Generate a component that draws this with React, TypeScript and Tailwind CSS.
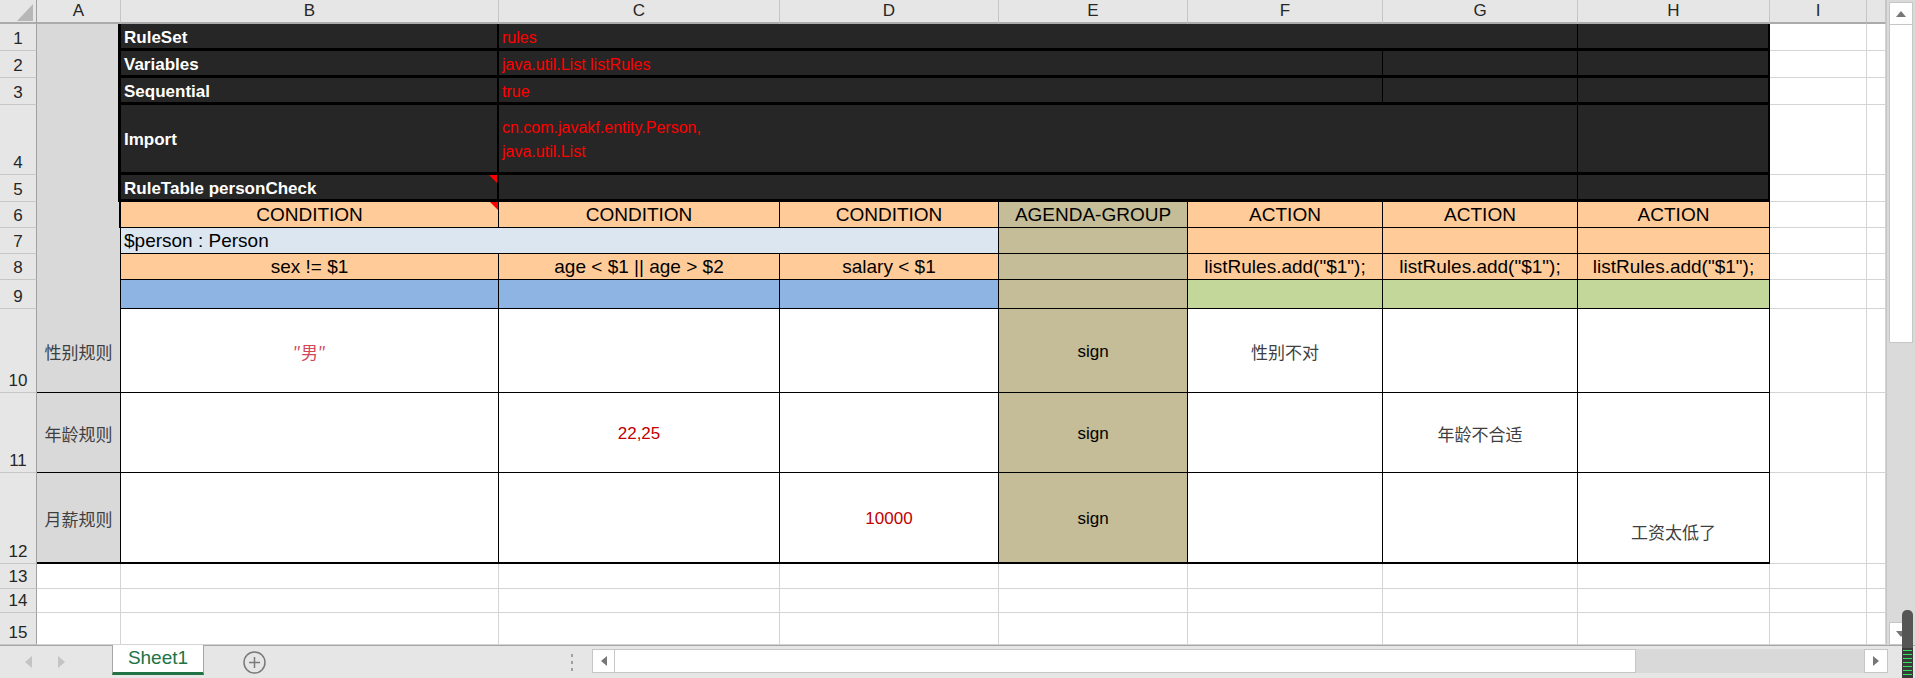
import React from 'react';

type Kids = { children?: React.ReactNode; className?: string };

// column header letters, last one is the clipped J column
const LETTERS = ['A', 'B', 'C', 'D', 'E', 'F', 'G', 'H', 'I', ''];

function Corner() {
  return (
    <div className="relative bg-[#e6e6e6] border-r border-r-[#a0a0a0] border-b-2 border-b-[#ababab]">
      <svg className="absolute left-0 top-0" width="37" height="24" viewBox="0 0 37 24">
        <polygon points="17,21 33,21 33,4" fill="#b7b7b7" />
      </svg>
    </div>
  );
}

function RowNum({ n }: { n: number }) {
  return (
    <div className="flex items-end justify-center bg-[#e6e6e6] border-r border-r-[#a0a0a0] border-b border-b-[#c6c6c6] pb-px text-[17px] leading-[20px] text-[#262626]">
      {n}
    </div>
  );
}

function Blank() {
  return <div className="bg-white border-r border-b border-[#d4d4d4]" />;
}

function Dark({ children, className = '' }: Kids) {
  return (
    <div className={`relative flex items-center px-[3px] pt-[3px] bg-[#262626] border-r border-b-[3px] border-black overflow-hidden whitespace-nowrap ${className}`}>
      {children}
    </div>
  );
}

function Label({ children }: Kids) {
  return <span className="text-[17px] font-bold text-white">{children}</span>;
}

function Red({ children }: Kids) {
  return <span className="text-[16px] text-[#ff0000]">{children}</span>;
}

function Cell({ children, className = '' }: Kids) {
  return (
    <div className={`relative flex items-center justify-center pt-[2px] border-r border-b border-black overflow-hidden whitespace-nowrap ${className}`}>
      {children}
    </div>
  );
}

function Flag() {
  return (
    <svg className="absolute right-0 top-0" width="8" height="8" viewBox="0 0 8 8">
      <polygon points="0,0 8,0 8,8" fill="#ff0000" />
    </svg>
  );
}

function Cjk({ children, className = '' }: Kids) {
  return (
    <span className={`font-['Noto_Sans_CJK_SC',sans-serif] text-[17px] ${className}`}>{children}</span>
  );
}

function VScroll() {
  return (
    <div className="w-[29px] h-[645px] flex flex-col items-center border-l border-[#c6c6c6] bg-[#dadada]">
      <div className="mt-[2px] w-[24px] h-[23px] bg-white border border-[#c6c6c6] flex items-center justify-center">
        <svg width="10" height="6" viewBox="0 0 10 6">
          <polygon points="0,6 10,6 5,0" fill="#777" />
        </svg>
      </div>
      <div className="w-[24px] h-[318px] bg-white border border-[#c6c6c6] border-t-0" />
      <div className="flex-1" />
      <div className="w-[24px] h-[23px] bg-white border border-[#c6c6c6] flex items-center justify-center">
        <svg width="10" height="6" viewBox="0 0 10 6">
          <polygon points="0,0 10,0 5,6" fill="#777" />
        </svg>
      </div>
    </div>
  );
}

function BottomBar() {
  return (
    <div className="flex h-[33px] bg-[#e6e6e6] border-t border-[#a6a6a6]">
      <div className="w-[112px] flex items-center">
        <svg className="ml-[25px]" width="7" height="12" viewBox="0 0 7 12">
          <polygon points="7,0 7,12 0,6" fill="#c4c4c4" />
        </svg>
        <svg className="ml-[26px]" width="7" height="12" viewBox="0 0 7 12">
          <polygon points="0,0 0,12 7,6" fill="#c4c4c4" />
        </svg>
      </div>
      <div className="w-[92px] h-[30px] -mt-px bg-white border-x border-[#a6a6a6] border-b-[3px] border-b-[#217346] flex items-center justify-center text-[19px] text-[#217346]">
        Sheet1
      </div>
      <div className="ml-[39px] flex items-center">
        <svg width="23" height="23" viewBox="0 0 23 23">
          <circle cx="11.5" cy="11.5" r="10.5" fill="none" stroke="#7a7a7a" strokeWidth="1.5" />
          <path d="M11.5 6v11M6 11.5h11" stroke="#7a7a7a" strokeWidth="1.5" />
        </svg>
      </div>
      <div className="w-[303px]" />
      <div className="w-[6px] flex flex-col items-center justify-center gap-[4px]">
        <div className="w-[2px] h-[3px] bg-[#a0a0a0]" />
        <div className="w-[2px] h-[3px] bg-[#a0a0a0]" />
        <div className="w-[2px] h-[3px] bg-[#a0a0a0]" />
      </div>
      <div className="w-[17px]" />
      <div className="w-[1296px] h-[24px] mt-[3px] flex">
        <div className="w-[23px] h-full bg-white border border-[#c6c6c6] flex items-center justify-center">
          <svg width="6" height="10" viewBox="0 0 6 10">
            <polygon points="6,0 6,10 0,5" fill="#777" />
          </svg>
        </div>
        <div className="w-[1021px] h-full bg-white border border-l-0 border-[#c6c6c6]" />
        <div className="flex-1 h-full bg-[#d9d9d9]" />
        <div className="w-[24px] h-full bg-white border border-[#c6c6c6] flex items-center justify-center">
          <svg width="6" height="10" viewBox="0 0 6 10">
            <polygon points="0,0 0,10 6,5" fill="#777" />
          </svg>
        </div>
      </div>
      <div className="flex-1" />
    </div>
  );
}

export default function App() {
  return (
    <div className="relative w-[1915px] h-[678px] overflow-hidden bg-white font-['Liberation_Sans',Arial,sans-serif] text-black">
      <div className="flex h-[645px]">
        <div className="grid w-[1886px] h-[645px] grid-cols-[37px_84px_378px_281px_219px_189px_195px_195px_192px_97px_19px] grid-rows-[24px_27px_27px_27px_70px_27px_26px_26px_26px_29px_84px_80px_91px_25px_24px_32px]">
          {/* column headers */}
          <Corner />
          {LETTERS.map((l, i) => (
            <div
              key={i}
              className="flex items-center justify-center bg-[#e6e6e6] border-r border-r-[#c6c6c6] border-b-2 border-b-[#ababab] text-[17px] text-[#262626]"
            >
              {l}
            </div>
          ))}

          {/* 1 */}
          <RowNum n={1} />
          <div className="bg-[#d9d9d9] border-r-[3px] border-black" />
          <Dark className="border-r-2"><Label>RuleSet</Label></Dark>
          <Dark className="col-span-5"><Red>rules</Red></Dark>
          <Dark className="border-r-2" />
          <Blank />
          <Blank />

          {/* 2 */}
          <RowNum n={2} />
          <div className="bg-[#d9d9d9] border-r-[3px] border-black" />
          <Dark className="border-r-2"><Label>Variables</Label></Dark>
          <Dark className="col-span-4"><Red>java.util.List listRules</Red></Dark>
          <Dark />
          <Dark className="border-r-2" />
          <Blank />
          <Blank />

          {/* 3 */}
          <RowNum n={3} />
          <div className="bg-[#d9d9d9] border-r-[3px] border-black" />
          <Dark className="border-r-2"><Label>Sequential</Label></Dark>
          <Dark className="col-span-4"><Red>true</Red></Dark>
          <Dark />
          <Dark className="border-r-2" />
          <Blank />
          <Blank />

          {/* 4 */}
          <RowNum n={4} />
          <div className="bg-[#d9d9d9] border-r-[3px] border-black" />
          <Dark className="border-r-2"><Label>Import</Label></Dark>
          <Dark className="col-span-5">
            <div className="flex flex-col leading-[24px]">
              <Red>cn.com.javakf.entity.Person,</Red>
              <Red>java.util.List</Red>
            </div>
          </Dark>
          <Dark className="border-r-2" />
          <Blank />
          <Blank />

          {/* 5 */}
          <RowNum n={5} />
          <div className="bg-[#d9d9d9] border-r-[3px] border-black" />
          <Dark className="border-r-2"><Label>RuleTable personCheck</Label><Flag /></Dark>
          <Dark className="col-span-5" />
          <Dark className="border-r-2" />
          <Blank />
          <Blank />

          {/* 6 */}
          <RowNum n={6} />
          <div className="bg-[#d9d9d9] border-r-2 border-black" />
          <Cell className="bg-[#ffcc99] text-[19px]">CONDITION<Flag /></Cell>
          <Cell className="bg-[#ffcc99] text-[19px]">CONDITION</Cell>
          <Cell className="bg-[#ffcc99] text-[19px]">CONDITION</Cell>
          <Cell className="bg-[#c4bd97] text-[19px]">AGENDA-GROUP</Cell>
          <Cell className="bg-[#ffcc99] text-[19px]">ACTION</Cell>
          <Cell className="bg-[#ffcc99] text-[19px]">ACTION</Cell>
          <Cell className="bg-[#ffcc99] text-[19px]">ACTION</Cell>
          <Blank />
          <Blank />

          {/* 7 */}
          <RowNum n={7} />
          <div className="bg-[#d9d9d9] border-r border-black" />
          <Cell className="col-span-3 !justify-start px-[3px] bg-[#dce6f1] text-[19px]">$person : Person</Cell>
          <Cell className="bg-[#c4bd97]" />
          <Cell className="bg-[#ffcc99]" />
          <Cell className="bg-[#ffcc99]" />
          <Cell className="bg-[#ffcc99]" />
          <Blank />
          <Blank />

          {/* 8 */}
          <RowNum n={8} />
          <div className="bg-[#d9d9d9] border-r border-black" />
          <Cell className="bg-[#ffcc99] text-[19px]">sex != $1</Cell>
          <Cell className="bg-[#ffcc99] text-[19px]">{'age < $1 || age > $2'}</Cell>
          <Cell className="bg-[#ffcc99] text-[19px]">{'salary < $1'}</Cell>
          <Cell className="bg-[#c4bd97]" />
          <Cell className="bg-[#ffcc99] text-[19px]">{'listRules.add("$1");'}</Cell>
          <Cell className="bg-[#ffcc99] text-[19px]">{'listRules.add("$1");'}</Cell>
          <Cell className="bg-[#ffcc99] text-[19px]">{'listRules.add("$1");'}</Cell>
          <Blank />
          <Blank />

          {/* 9 */}
          <RowNum n={9} />
          <div className="bg-[#d9d9d9] border-r border-black" />
          <Cell className="bg-[#8db4e2]" />
          <Cell className="bg-[#8db4e2]" />
          <Cell className="bg-[#8db4e2]" />
          <Cell className="bg-[#c4bd97]" />
          <Cell className="bg-[#c4d79b]" />
          <Cell className="bg-[#c4d79b]" />
          <Cell className="bg-[#c4d79b]" />
          <Blank />
          <Blank />

          {/* 10 */}
          <RowNum n={10} />
          <Cell className="bg-[#d9d9d9]"><Cjk className="text-[#3f3f3f]">性别规则</Cjk></Cell>
          <Cell className="bg-white"><Cjk className="text-[#d0485a]">″男″</Cjk></Cell>
          <Cell className="bg-white" />
          <Cell className="bg-white" />
          <Cell className="bg-[#c4bd97] text-[17px]">sign</Cell>
          <Cell className="bg-white"><Cjk className="text-[#3f3f3f]">性别不对</Cjk></Cell>
          <Cell className="bg-white" />
          <Cell className="bg-white" />
          <Blank />
          <Blank />

          {/* 11 */}
          <RowNum n={11} />
          <Cell className="bg-[#d9d9d9]"><Cjk className="text-[#3f3f3f]">年龄规则</Cjk></Cell>
          <Cell className="bg-white" />
          <Cell className="bg-white text-[17px] text-[#c00000]">22,25</Cell>
          <Cell className="bg-white" />
          <Cell className="bg-[#c4bd97] text-[17px]">sign</Cell>
          <Cell className="bg-white" />
          <Cell className="bg-white"><Cjk className="text-[#3f3f3f]">年龄不合适</Cjk></Cell>
          <Cell className="bg-white" />
          <Blank />
          <Blank />

          {/* 12 */}
          <RowNum n={12} />
          <Cell className="bg-[#d9d9d9] border-b-2"><Cjk className="text-[#3f3f3f]">月薪规则</Cjk></Cell>
          <Cell className="bg-white border-b-2" />
          <Cell className="bg-white border-b-2" />
          <Cell className="bg-white border-b-2 text-[17px] text-[#c00000]">10000</Cell>
          <Cell className="bg-[#c4bd97] border-b-2 text-[17px]">sign</Cell>
          <Cell className="bg-white border-b-2" />
          <Cell className="bg-white border-b-2" />
          <Cell className="bg-white border-b-2 !pt-[28px]"><Cjk className="text-[#3f3f3f]">工资太低了</Cjk></Cell>
          <Blank />
          <Blank />

          {/* 13 - 15 */}
          {[13, 14, 15].map((n) => (
            <React.Fragment key={n}>
              <RowNum n={n} />
              {Array.from({ length: 10 }).map((_, i) => (
                <Blank key={i} />
              ))}
            </React.Fragment>
          ))}
        </div>
        <VScroll />
      </div>
      <BottomBar />

      {/* floating capture widget at the bottom-right corner */}
      <div className="absolute left-[1902px] top-[610px] w-[11px] h-[68px] flex flex-col">
        <div className="h-[38px] rounded-t-[5px] bg-[#555]" />
        <div className="flex-1 bg-[#3a3a3a] flex flex-col gap-[3px] pt-[2px] px-[1px]">
          {Array.from({ length: 7 }).map((_, i) => (
            <div key={i} className="h-px bg-[#2ee65a]" />
          ))}
        </div>
      </div>
    </div>
  );
}
